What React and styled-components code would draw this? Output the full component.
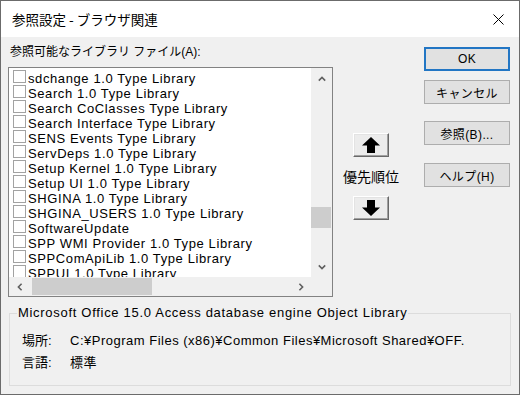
import React from "react";
import styled, { createGlobalStyle } from "styled-components";

const GlobalStyle = createGlobalStyle`
  html, body {
    margin: 0;
    padding: 0;
    background: #ffffff;
  }
  * {
    box-sizing: border-box;
  }
`;

const UI_FONT = `"Liberation Sans", "Noto Sans CJK JP", sans-serif`;

// Window frame
const Dialog = styled.div`
  width: 520px;
  height: 395px;
  border: 1px solid #6b6b6b;
  background: #f0f0f0;
  display: flex;
  flex-direction: column;
  font-family: ${UI_FONT};
  font-size: 13px;
  color: #000;
  overflow: hidden;
`;

const TitleBar = styled.div`
  height: 36px;
  flex-shrink: 0;
  background: #ffffff;
  display: flex;
  align-items: center;
  justify-content: space-between;
`;

const Title = styled.div`
  padding-left: 11px;
  font-family: "Noto Sans CJK JP", sans-serif;
  font-size: 13.5px;
  line-height: 36px;
  white-space: nowrap;
`;

const CloseButton = styled.div`
  width: 41px;
  height: 36px;
  display: flex;
  align-items: center;
  justify-content: center;
`;

const Body = styled.div`
  flex: 1;
  display: flex;
  flex-direction: column;
  padding: 8px 9px 8px 7px;
`;

const TopSection = styled.div`
  display: flex;
  height: 252px;
`;

// Library list
const LeftColumn = styled.div`
  width: 325px;
  display: flex;
  flex-direction: column;
`;

const FieldLabel = styled.div`
  height: 14px;
  line-height: 14px;
  padding-left: 2px;
  margin-bottom: 8px;
  font-size: 12px;
  white-space: nowrap;
`;

const ListBox = styled.div`
  height: 230px;
  border: 1px solid #828282;
  background: #ffffff;
  display: grid;
  grid-template-columns: 302px 21px;
  grid-template-rows: 209px 19px;
`;

const Items = styled.div`
  overflow: hidden;
  padding: 2px 0 0 4px;
`;

const Item = styled.div`
  height: 15px;
  display: flex;
  align-items: flex-start;
  gap: 2px;
  white-space: nowrap;
  line-height: 15px;
  letter-spacing: 0.6px;
`;

const CheckBox = styled.span`
  width: 13px;
  height: 13px;
  flex-shrink: 0;
  border: 1px solid #a2a2a2;
  background: #ffffff;
`;

const ItemText = styled.span`
  margin-top: 1px;
`;

const VScroll = styled.div`
  background: #f0f0f0;
  display: flex;
  flex-direction: column;
`;

const HScroll = styled.div`
  background: #f0f0f0;
  display: flex;
`;

const Corner = styled.div`
  background: #f0f0f0;
`;

const ScrollArrow = styled.div`
  flex: 0 0 21px;
  display: flex;
  align-items: center;
  justify-content: center;
`;

const Track = styled.div`
  flex: 1;
  display: flex;
  flex-direction: ${(p) => (p.$vertical ? "column" : "row")};
  padding: ${(p) => (p.$vertical ? "0 1px 0 0" : "1px 0")};
`;

const Thumb = styled.div`
  background: #cdcdcd;
  flex-shrink: 0;
`;

// Priority column
const PriorityColumn = styled.div`
  width: 76px;
  display: flex;
  flex-direction: column;
  align-items: center;
  padding-top: 88px;
`;

const PriorityButton = styled.div`
  width: 36px;
  height: 24px;
  background: #ececec;
  border-top: 1px solid #ffffff;
  border-left: 1px solid #ffffff;
  border-right: 1px solid #696969;
  border-bottom: 1px solid #696969;
  box-shadow: inset -1px -1px 0 #a0a0a0, inset 1px 1px 0 #e3e3e3;
  display: flex;
  align-items: center;
  justify-content: center;
`;

const PriorityLabel = styled.div`
  margin: 11px 0 12px;
  height: 16px;
  line-height: 16px;
  font-family: "Noto Sans CJK JP", sans-serif;
  font-size: 14px;
  white-space: nowrap;
`;

// Command buttons
const ButtonColumn = styled.div`
  width: 86px;
  margin-left: 15px;
  display: flex;
  flex-direction: column;
`;

const Button = styled.div`
  height: 24px;
  margin-top: ${(p) => p.$gap}px;
  background: #e1e1e1;
  border: ${(p) => (p.$default ? "2px solid #2276c4" : "1px solid #adadad")};
  display: flex;
  align-items: center;
  justify-content: center;
  font-size: 12px;
  letter-spacing: 0.4px;
  white-space: nowrap;
`;

// Details group
const GroupBox = styled.fieldset`
  margin: 9px -1px 0 1px;
  padding: 13px 8px 14px 7px;
  border: 1px solid #dcdcdc;
  min-width: 0;
`;

const GroupLegend = styled.legend`
  padding: 0 1px;
  line-height: 14px;
  height: 14px;
  letter-spacing: 0.7px;
  white-space: nowrap;
`;

const InfoRow = styled.div`
  display: flex;
  height: 16px;
  line-height: 16px;
  padding-left: 5px;
  margin-top: ${(p) => p.$gap || 0}px;
  white-space: nowrap;
`;

const InfoKey = styled.span`
  width: 48px;
  flex-shrink: 0;
`;

const InfoValue = styled.span`
  letter-spacing: 0.5px;
`;

const libraries = [
  "sdchange 1.0 Type Library",
  "Search 1.0 Type Library",
  "Search CoClasses Type Library",
  "Search Interface Type Library",
  "SENS Events Type Library",
  "ServDeps 1.0 Type Library",
  "Setup Kernel 1.0 Type Library",
  "Setup UI 1.0 Type Library",
  "SHGINA 1.0 Type Library",
  "SHGINA_USERS 1.0 Type Library",
  "SoftwareUpdate",
  "SPP WMI Provider 1.0 Type Library",
  "SPPComApiLib 1.0 Type Library",
  "SPPUI 1.0 Type Library",
];

const Chevron = ({ dir }) => {
  const points = {
    up: "0.8,4.6 4,1.4 7.2,4.6",
    down: "0.8,1.4 4,4.6 7.2,1.4",
    left: "4.6,0.8 1.4,4 4.6,7.2",
    right: "1.4,0.8 4.6,4 1.4,7.2",
  }[dir];
  const vertical = dir === "up" || dir === "down";
  return (
    <svg width={vertical ? 8 : 6} height={vertical ? 6 : 8}>
      <polyline points={points} fill="none" stroke="#606060" strokeWidth="1.6" />
    </svg>
  );
};

const BigArrow = ({ down }) => (
  <svg width="18" height="16" viewBox="0 0 18 16">
    <polygon
      points="9,0 18,8.5 13,8.5 13,16 5,16 5,8.5 0,8.5"
      fill="#000"
      transform={down ? "rotate(180 9 8)" : undefined}
    />
  </svg>
);

export default function App() {
  return (
    <>
      <GlobalStyle />
      <Dialog>
        <TitleBar>
          <Title>参照設定 - ブラウザ関連</Title>
          <CloseButton>
            <svg width="11" height="11">
              <path d="M0.5 0.5 L10.5 10.5 M10.5 0.5 L0.5 10.5" stroke="#000" strokeWidth="1" />
            </svg>
          </CloseButton>
        </TitleBar>
        <Body>
          <TopSection>
            <LeftColumn>
              <FieldLabel>参照可能なライブラリ ファイル(A):</FieldLabel>
              <ListBox>
                <Items>
                  {libraries.map((name) => (
                    <Item key={name}>
                      <CheckBox />
                      <ItemText>{name}</ItemText>
                    </Item>
                  ))}
                </Items>
                <VScroll>
                  <ScrollArrow>
                    <Chevron dir="up" />
                  </ScrollArrow>
                  <Track $vertical>
                    <Thumb style={{ marginTop: 118, height: 21 }} />
                  </Track>
                  <ScrollArrow>
                    <Chevron dir="down" />
                  </ScrollArrow>
                </VScroll>
                <HScroll>
                  <ScrollArrow>
                    <Chevron dir="left" />
                  </ScrollArrow>
                  <Track>
                    <Thumb style={{ marginLeft: 2, width: 120 }} />
                  </Track>
                  <ScrollArrow>
                    <Chevron dir="right" />
                  </ScrollArrow>
                </HScroll>
                <Corner />
              </ListBox>
            </LeftColumn>
            <PriorityColumn>
              <PriorityButton>
                <BigArrow />
              </PriorityButton>
              <PriorityLabel>優先順位</PriorityLabel>
              <PriorityButton>
                <BigArrow down />
              </PriorityButton>
            </PriorityColumn>
            <ButtonColumn>
              <Button $default $gap={2}>OK</Button>
              <Button $gap={9}>キャンセル</Button>
              <Button $gap={17}>参照(B)...</Button>
              <Button $gap={18}>ヘルプ(H)</Button>
            </ButtonColumn>
          </TopSection>
          <GroupBox>
            <GroupLegend>Microsoft Office 15.0 Access database engine Object Library</GroupLegend>
            <InfoRow>
              <InfoKey>場所:</InfoKey>
              <InfoValue>C:¥Program Files (x86)¥Common Files¥Microsoft Shared¥OFF.</InfoValue>
            </InfoRow>
            <InfoRow $gap={6}>
              <InfoKey>言語:</InfoKey>
              <InfoValue>標準</InfoValue>
            </InfoRow>
          </GroupBox>
        </Body>
      </Dialog>
    </>
  );
}
